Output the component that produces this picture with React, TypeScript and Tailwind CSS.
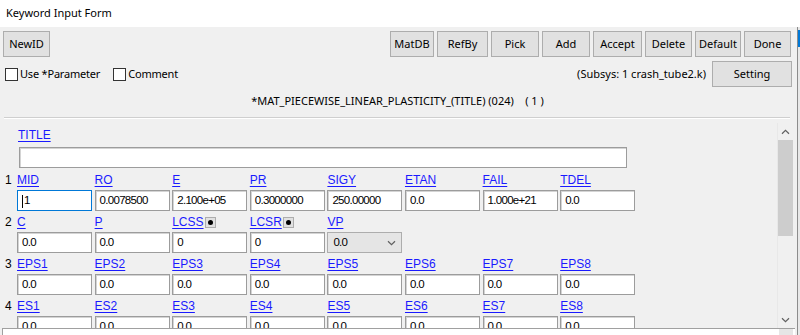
import type { ReactNode } from 'react';

const TOOL_BUTTONS = [
  { label: 'MatDB', w: 'w-[44px]' },
  { label: 'RefBy', w: 'w-[51px]' },
  { label: 'Pick', w: 'w-[48px]' },
  { label: 'Add', w: 'w-[48px]' },
  { label: 'Accept', w: 'w-[49px]' },
  { label: 'Delete', w: 'w-[47px]' },
  { label: 'Default', w: 'w-[46px]' },
  { label: 'Done', w: 'w-[47px]' },
];

type Field = { name: string; value: string; pick?: boolean; select?: boolean; focus?: boolean };

const ROWS: { n: number; fields: Field[] }[] = [
  {
    n: 1,
    fields: [
      { name: 'MID', value: '1', focus: true },
      { name: 'RO', value: '0.0078500' },
      { name: 'E', value: '2.100e+05' },
      { name: 'PR', value: '0.3000000' },
      { name: 'SIGY', value: '250.00000' },
      { name: 'ETAN', value: '0.0' },
      { name: 'FAIL', value: '1.000e+21' },
      { name: 'TDEL', value: '0.0' },
    ],
  },
  {
    n: 2,
    fields: [
      { name: 'C', value: '0.0' },
      { name: 'P', value: '0.0' },
      { name: 'LCSS', value: '0', pick: true },
      { name: 'LCSR', value: '0', pick: true },
      { name: 'VP', value: '0.0', select: true },
    ],
  },
  {
    n: 3,
    fields: [1, 2, 3, 4, 5, 6, 7, 8].map((i) => ({ name: `EPS${i}`, value: '0.0' })),
  },
  {
    n: 4,
    fields: [1, 2, 3, 4, 5, 6, 7, 8].map((i) => ({ name: `ES${i}`, value: '0.0' })),
  },
];

function WinButton({ children, className = '' }: { children: ReactNode; className?: string }) {
  return (
    <div
      className={`flex h-[26px] items-center justify-center border border-[#adadad] bg-[#e1e1e1] ${className}`}
    >
      {children}
    </div>
  );
}

function CheckBox({ label }: { label: string }) {
  return (
    <div className="flex items-center gap-[2px]">
      <div className="h-[13px] w-[13px] border border-[#333] bg-white" />
      <span className="tracking-[-0.2px]">{label}</span>
    </div>
  );
}

function KeyLabel({ name }: { name: string }) {
  return <span className="text-[#1a1aff] underline decoration-1 underline-offset-[2px]">{name}</span>;
}

function PickButton() {
  return (
    <div className="ml-[1px] flex h-[11px] w-[11px] items-center justify-center border border-[#adadad] bg-[#e1e1e1]">
      <div className="h-[5px] w-[5px] rounded-full bg-black" />
    </div>
  );
}

function Chevron({ up }: { up?: boolean }) {
  return (
    <svg width="9" height="6" viewBox="0 0 9 6" className={up ? 'rotate-180' : ''}>
      <path d="M1 1.2 L4.5 4.6 L8 1.2" fill="none" stroke="#606060" strokeWidth="1.2" />
    </svg>
  );
}

function ValueBox({ f }: { f: Field }) {
  if (f.select) {
    return (
      <div className="flex h-[21px] items-center justify-between border border-[#adadad] bg-[#e5e5e5] pl-[5px] pr-[5px]">
        <span className="font-['Liberation_Sans'] text-[11.5px] tracking-[-0.7px]">{f.value}</span>
        <Chevron />
      </div>
    );
  }
  return (
    <div
      className={`flex h-[21px] items-center bg-white pl-[4px] pt-[1px] font-['Liberation_Sans'] text-[11.5px] tracking-[-0.7px] ${
        f.focus
          ? 'border border-[#0078d7]'
          : 'border border-[#9c9c9c] shadow-[inset_1px_1px_0_#d4d4d4]'
      }`}
    >
      {f.focus && <span className="mr-[1px] h-[13px] w-[1px] bg-black" />}
      {f.value}
    </div>
  );
}

export default function App() {
  return (
    <div className="flex h-[335px] w-[800px] flex-col overflow-hidden bg-[#f0f0f0] font-['Noto_Sans',sans-serif] text-[11px] text-black">
      <div className="flex h-[27px] shrink-0 items-center bg-white pl-[6px]">Keyword Input Form</div>

      <div className="flex min-h-0 flex-1">
        <div className="flex min-w-0 flex-1 flex-col">
          {/* toolbar */}
          <div className="mt-[4px] flex items-center pl-[3px] pr-[4px]">
            <WinButton className="w-[47px]">NewID</WinButton>
            <div className="flex-1" />
            <div className="flex gap-[3px]">
              {TOOL_BUTTONS.map((b) => (
                <WinButton key={b.label} className={b.w}>
                  {b.label}
                </WinButton>
              ))}
            </div>
          </div>

          {/* options */}
          <div className="mt-[4px] flex items-center pl-[5px] pr-[3px]">
            <div className="flex items-center gap-[13px]">
              <CheckBox label="Use *Parameter" />
              <CheckBox label="Comment" />
            </div>
            <div className="flex-1" />
            <span className="mr-[6px]">(Subsys: 1 crash_tube2.k)</span>
            <WinButton className="w-[80px]">Setting</WinButton>
          </div>

          <div className="flex h-[28px] items-center justify-center whitespace-pre">
            *MAT_PIECEWISE_LINEAR_PLASTICITY_(TITLE) (024)    ( 1 )
          </div>

          <div className="ml-[4px] mr-[5px] mt-[2px] h-[2px] border-t border-[#cfcfcf] bg-white" />

          {/* keyword card area */}
          <div className="mt-[4px] flex h-[205px] shrink-0">
            <div className="min-w-0 flex-1 overflow-hidden font-['Liberation_Sans'] text-[12px]">
              <div className="ml-[18px] mt-[5px] flex h-[14px] items-center">
                <KeyLabel name="TITLE" />
              </div>
              <div className="ml-[19px] mt-[5px] h-[21px] w-[608px] border border-[#9c9c9c] bg-white shadow-[inset_1px_1px_0_#d4d4d4]" />

              <div className="mt-[5px] flex flex-col gap-[4px]">
                {ROWS.map((row) => (
                  <div key={row.n} className="flex flex-col gap-[3px]">
                    <div className="flex h-[14px] items-center">
                      <span className="w-[17px] pl-[5px] text-[12px]">{row.n}</span>
                      <div className="grid grid-cols-[repeat(8,75px)] gap-x-[2.6px]">
                        {row.fields.map((f) => (
                          <div key={f.name} className="flex items-center">
                            <KeyLabel name={f.name} />
                            {f.pick && <PickButton />}
                          </div>
                        ))}
                      </div>
                    </div>
                    <div className="ml-[17px] grid grid-cols-[repeat(8,75px)] gap-x-[2.6px]">
                      {row.fields.map((f) => (
                        <ValueBox key={f.name} f={f} />
                      ))}
                    </div>
                  </div>
                ))}
              </div>
            </div>

            {/* vertical scrollbar */}
            <div className="mr-[2px] flex w-[16px] flex-col items-center border-l border-[#e8e8e8] bg-[#f0f0f0]">
              <div className="flex h-[17px] items-center">
                <Chevron up />
              </div>
              <div className="h-[96px] w-[15px] bg-[#cdcdcd]" />
              <div className="flex-1" />
              <div className="flex h-[17px] items-center">
                <Chevron />
              </div>
            </div>
          </div>

          {/* bottom panel */}
          <div className="ml-[2px] flex flex-1 border-l border-t border-[#a0a0a0] bg-white">
            <div className="flex-1" />
            <div className="mr-[2px] w-[14px] bg-[#e6e6e6]" />
          </div>
        </div>

        {/* right window edge */}
        <div className="flex w-[5px] shrink-0">
          <div className="w-[2px]" />
          <div className="w-[1px] bg-[#8c8c8c]" />
          <div className="flex w-[2px] flex-col bg-[#e8e8e8]">
            <div className="mt-[3px] h-[17px] bg-[#0078d7]" />
          </div>
        </div>
      </div>
    </div>
  );
}
